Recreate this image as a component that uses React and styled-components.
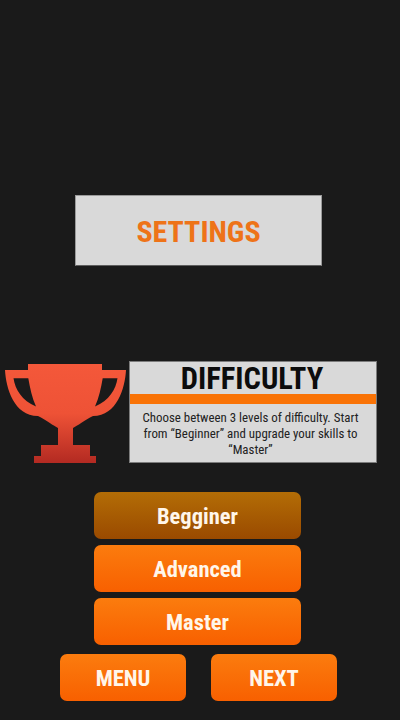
import React from "react";
import styled, { createGlobalStyle } from "styled-components";

const GlobalStyle = createGlobalStyle`
  html, body {
    margin: 0;
    padding: 0;
    background: #1a1a1a;
  }
`;

const Screen = styled.div`
  width: 400px;
  height: 720px;
  overflow: hidden;
  box-sizing: border-box;
  padding-top: 195px;
  background: #1a1a1a;
  font-family: Roboto, "Liberation Sans", sans-serif;
  font-stretch: condensed;
`;

const SettingsBanner = styled.div`
  width: 247px;
  height: 71px;
  margin-left: 75px;
  padding-top: 1px;
  box-sizing: border-box;
  border: 1px solid #9a9a9a;
  border-bottom-color: #5e5e5e;
  background: #d9d9d9;
  display: flex;
  align-items: center;
  justify-content: center;
  color: #ee7318;
  font-size: 30px;
  font-weight: 700;
`;

const DifficultyRow = styled.div`
  display: flex;
  margin-top: 95px;
  padding-left: 5px;
  gap: 3px;
`;

const Trophy = styled.svg`
  width: 121px;
  height: 99px;
  margin-top: 3px;
  flex-shrink: 0;
`;

const InfoCard = styled.div`
  width: 248px;
  height: 102px;
  box-sizing: border-box;
  border: 1px solid #7c7c7c;
  background: #d9d9d9;
  display: flex;
  flex-direction: column;
`;

const InfoTitle = styled.div`
  height: 32px;
  padding: 1px 2px 0 0;
  box-sizing: border-box;
  display: flex;
  align-items: center;
  justify-content: center;
  color: #0c0c0c;
  font-size: 30.5px;
  font-weight: 700;
`;

const Divider = styled.div`
  height: 10px;
  background: #f97306;
`;

const InfoText = styled.div`
  padding: 6px 5px 0 0;
  text-align: center;
  color: #222;
  font-size: 12.9px;
  line-height: 16px;
`;

const Choices = styled.div`
  display: flex;
  flex-direction: column;
  gap: 6px;
  width: 207px;
  margin: 29px 0 0 94px;
`;

const GameButton = styled.div`
  width: ${(p) => p.$width}px;
  height: 47px;
  border-radius: 7px;
  display: flex;
  align-items: center;
  justify-content: center;
  color: #fff6ea;
  font-size: 22.5px;
  font-weight: 700;
  background: ${(p) =>
    p.$dimmed
      ? "linear-gradient(#b36d06, #9a4a00)"
      : "linear-gradient(#fb7c0e, #f86000)"};
`;

const BottomBar = styled.div`
  display: flex;
  gap: 25px;
  margin: 9px 0 0 60px;
`;

const TrophyIcon = () => (
  <Trophy viewBox="0 0 121 99">
    <defs>
      <linearGradient id="cup" x1="0" y1="0" x2="0" y2="1">
        <stop offset="0" stopColor="#f4583a" />
        <stop offset="0.5" stopColor="#ee5236" />
        <stop offset="1" stopColor="#b32a22" />
      </linearGradient>
    </defs>
    <path
      fill="url(#cup)"
      fillRule="evenodd"
      d="M23 0H97V6H121C120 24 112 52 88 52C80 56 72 62 68 64V81H85V92H91V99H29V92H36V81H53V64C49 62 41 56 33 52C9 52 1 24 0 6H23ZM8.5 14.3C10 25 17 37 31 42.5C27 34 25 24 23.3 14.3ZM112.5 14.3C111 25 104 37 90 42.5C94 34 96 24 97.7 14.3Z"
    />
  </Trophy>
);

export default function App() {
  return (
    <>
      <GlobalStyle />
      <Screen>
        <SettingsBanner>SETTINGS</SettingsBanner>
        <DifficultyRow>
          <TrophyIcon />
          <InfoCard>
            <InfoTitle>DIFFICULTY</InfoTitle>
            <Divider />
            <InfoText>
              Choose between 3 levels of difficulty. Start
              <br />
              from “Beginner” and upgrade your skills to
              <br />
              “Master”
            </InfoText>
          </InfoCard>
        </DifficultyRow>
        <Choices>
          <GameButton $width={207} $dimmed>
            Begginer
          </GameButton>
          <GameButton $width={207}>Advanced</GameButton>
          <GameButton $width={207}>Master</GameButton>
        </Choices>
        <BottomBar>
          <GameButton $width={126}>MENU</GameButton>
          <GameButton $width={126}>NEXT</GameButton>
        </BottomBar>
      </Screen>
    </>
  );
}
